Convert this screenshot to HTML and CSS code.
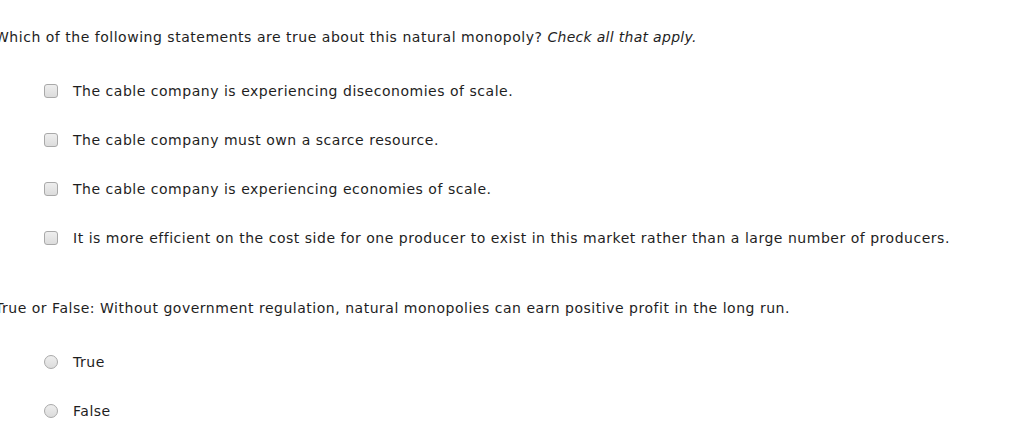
FILE: index.html
```html
<!DOCTYPE html>
<html>
<head>
<meta charset="utf-8">
<link rel="stylesheet" href="styles.css">
</head>
<body>
<div class="page">
  <section class="question">
    <p class="prompt">Which of the following statements are true about this natural monopoly? <em>Check all that apply.</em></p>
    <ul class="choices">
      <li class="choice"><span class="box check"></span><span class="label">The cable company is experiencing diseconomies of scale.</span></li>
      <li class="choice"><span class="box check"></span><span class="label">The cable company must own a scarce resource.</span></li>
      <li class="choice"><span class="box check"></span><span class="label">The cable company is experiencing economies of scale.</span></li>
      <li class="choice"><span class="box check"></span><span class="label">It is more efficient on the cost side for one producer to exist in this market rather than a large number of producers.</span></li>
    </ul>
  </section>
  <section class="question q2">
    <p class="prompt">True or False: Without government regulation, natural monopolies can earn positive profit in the long run.</p>
    <ul class="choices radios">
      <li class="choice"><span class="box radio"></span><span class="label">True</span></li>
      <li class="choice"><span class="box radio"></span><span class="label">False</span></li>
    </ul>
  </section>
</div>
</body>
</html>
```
FILE: styles.css
```css
html, body {
  margin: 0;
  padding: 0;
  background: #ffffff;
}
body {
  font-family: "DejaVu Sans", Verdana, sans-serif;
  font-size: 14px;
  letter-spacing: 0.52px;
  color: #1e1e1e;
}
.page {
  margin-left: -5px;
  padding-top: 28px;
}
.prompt {
  margin: 0;
  line-height: 18px;
}
.prompt em {
  letter-spacing: 0.3px;
}
.choices {
  list-style: none;
  margin: 0;
  padding: 0 0 0 49px;
}
.question .choices {
  padding-top: 36px;
  display: flex;
  flex-direction: column;
  gap: 31px;
}
.choice {
  display: flex;
  align-items: center;
  height: 18px;
  line-height: 18px;
}
.box {
  flex: none;
  width: 14px;
  height: 14px;
  box-sizing: border-box;
  border: 1px solid #a9a9a9;
  background: linear-gradient(#eeeeee, #dcdcdc);
  margin-right: 15px;
}
.check {
  border-radius: 3px;
}
.radio {
  border-radius: 50%;
}
.q2 {
  margin-top: 52px;
}
.q2 .choices {
  padding-top: 36px;
}
```
